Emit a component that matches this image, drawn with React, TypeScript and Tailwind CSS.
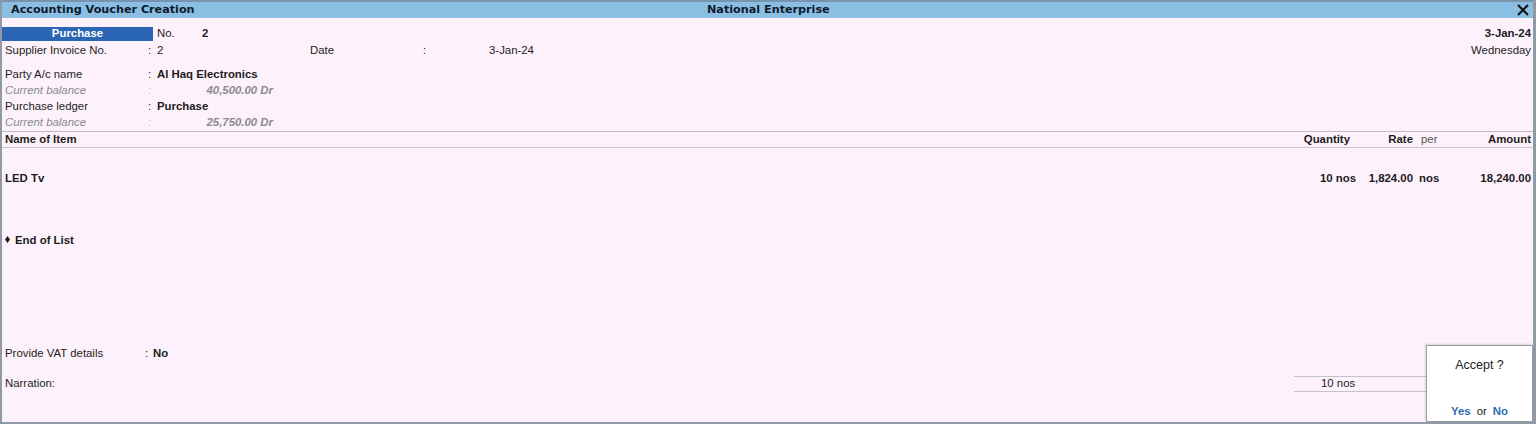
import React from "react";

const body = "font-['Liberation_Sans',Arial,sans-serif]";

const items = [
  { name: "LED Tv", qty: "10 nos", rate: "1,824.00", per: "nos", amount: "18,240.00" },
];

const Field: React.FC<{
  label: string;
  value: string;
  bold?: boolean;
}> = ({ label, value, bold }) => (
  <div className="flex h-[16px] items-center">
    <span className="w-[146px] pl-[3px]">{label}</span>
    <span className="w-[9px]">:</span>
    <span className={bold ? "font-bold" : ""}>{value}</span>
  </div>
);

const Balance: React.FC<{ value: string }> = ({ value }) => (
  <div className="flex h-[16px] items-center italic text-[#8a8a8a]">
    <span className="w-[146px] pl-[3px]">Current balance</span>
    <span className="w-[9px] text-[#c4c4c4]">:</span>
    <span className="w-[116px] text-right font-bold">{value}</span>
  </div>
);

const App: React.FC = () => {
  return (
    <div
      className={`relative flex h-[424px] w-[1536px] flex-col overflow-hidden border-b-2 border-l-2 border-r-[3px] border-[#8f9aa6] bg-[#fdf2fb] text-[11.4px] text-[#1c1c1c] ${body}`}
    >
      {/* title bar */}
      <div className="relative flex h-[18px] shrink-0 items-center border-t-2 border-[#7894ad] bg-[#8bbee3] font-['DejaVu_Sans',sans-serif] text-[11.2px] font-bold text-[#0d1a2b]">
        <span className="pl-[9px]">Accounting Voucher Creation</span>
        <span className="absolute left-[705px]">National Enterprise</span>
        <svg
          className="absolute right-[4px] top-[2px]"
          width="12"
          height="12"
          viewBox="0 0 12 12"
        >
          <path d="M1 1L11 11M11 1L1 11" stroke="#111" strokeWidth="2" />
        </svg>
      </div>

      <div className="h-[8px] shrink-0" />

      {/* voucher type row */}
      <div className="flex h-[15px] items-center">
        <span className="flex h-[14px] w-[151px] items-center justify-center bg-[#2b66b5] font-bold text-white">
          Purchase
        </span>
        <span className="w-[49px] pl-[4px]">No.</span>
        <span className="font-bold">2</span>
        <span className="ml-auto pr-[2px] font-bold">3-Jan-24</span>
      </div>

      <div className="flex h-[19px] items-center">
        <span className="w-[146px] pl-[3px]">Supplier Invoice No.</span>
        <span className="w-[9px]">:</span>
        <span className="w-[153px]">2</span>
        <span className="w-[113px]">Date</span>
        <span className="w-[66px]">:</span>
        <span>3-Jan-24</span>
        <span className="ml-auto pr-[2px]">Wednesday</span>
      </div>

      <div className="h-[7px] shrink-0" />

      <Field label="Party A/c name" value="Al Haq Electronics" bold />
      <Balance value="40,500.00 Dr" />
      <Field label="Purchase ledger" value="Purchase" bold />
      <Balance value="25,750.00 Dr" />

      {/* item table header */}
      <div className="flex h-[17px] shrink-0 items-center border-y border-t-[#bdbdbd] border-b-[#c9c9c9] font-bold">
        <span className="flex-1 pl-[3px]">Name of Item</span>
        <span className="w-[120px] pr-[12px] text-right">Quantity</span>
        <span className="w-[56px] pr-[5px] text-right">Rate</span>
        <span className="w-[34px] pl-[3px] font-normal text-[#555]">per</span>
        <span className="w-[81px] pr-[2px] text-right">Amount</span>
      </div>

      {items.map((it) => (
        <div key={it.name} className="mt-[23px] flex h-[16px] items-center font-bold">
          <span className="flex-1 pl-[3px]">{it.name}</span>
          <span className="w-[120px] pr-[6px] text-right">{it.qty}</span>
          <span className="w-[56px] pr-[5px] text-right">{it.rate}</span>
          <span className="w-[34px] pl-[1px]">{it.per}</span>
          <span className="w-[81px] pr-[2px] text-right">{it.amount}</span>
        </div>
      ))}

      <div className="mt-[46px] flex h-[16px] items-center pl-[3px] font-bold">
        <svg className="mr-[5px] mb-[3px]" width="5" height="7" viewBox="0 0 5 7">
          <polygon points="2.5,0 5,3.5 2.5,7 0,3.5" fill="#1c1c1c" />
        </svg>
        End of List
      </div>

      <div className="mt-[97px] flex h-[16px] items-center">
        <span className="w-[143px] pl-[3px]">Provide VAT details</span>
        <span className="w-[8px]">:</span>
        <span className="font-bold">No</span>
      </div>

      <div className="mt-[13px] flex items-center">
        <span className="pl-[3px]">Narration:</span>
        <div className="ml-auto mr-[107px] flex h-[16px] w-[132px] items-center border-y border-[#c4c4c4] pl-[27px]">
          10 nos
        </div>
      </div>

      {/* accept dialog */}
      <div className="absolute bottom-0 right-0 flex h-[77px] w-[107px] flex-col items-center border border-[#9c9c9c] bg-white shadow-[-1px_-1px_2px_rgba(0,0,0,0.15)]">
        <span className="mt-[10px] text-[12.5px] text-[#222]">Accept ?</span>
        <div className="mt-auto mb-[1px] flex items-baseline gap-[6px]">
          <span className="font-bold text-[#2f6bb5]">Yes</span>
          <span>or</span>
          <span className="font-bold text-[#2f6bb5]">No</span>
        </div>
      </div>
    </div>
  );
};

export default App;
